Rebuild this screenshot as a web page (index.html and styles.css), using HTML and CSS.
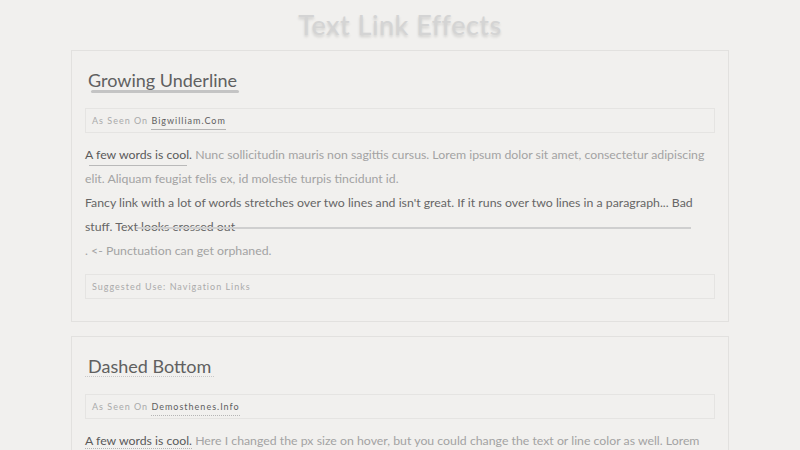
FILE: index.html
```html
<!DOCTYPE html>
<html lang="en">
<head>
<meta charset="UTF-8" />
<meta name="viewport" content="width=device-width, initial-scale=1.0" />
<title>Text Link Effects</title>
<link rel="stylesheet" href="styles.css">
</head>
<body>
  <h1 class="page-title">Text Link Effects</h1>

  <!-- Effect 1 -->
  <section class="card">
    <h2><span class="grow-title">Growing Underline</span></h2>
    <div class="note">As Seen On <a href="#" class="source">Bigwilliam.Com</a></div>
    <p><a href="#" class="grow">A few words is cool.</a> Nunc sollicitudin mauris non sagittis cursus. Lorem ipsum dolor sit amet, consectetur adipiscing elit. Aliquam feugiat felis ex, id molestie turpis tincidunt id.</p>
    <p class="fancy"><a href="#" class="dark">Fancy link with a lot of words stretches over two lines and isn't great. If it runs over two lines in a paragraph... Bad stuff. Text looks crossed out</a><span class="cross"></span></p>
    <p>. &lt;- Punctuation can get orphaned.</p>
    <div class="note">Suggested Use: Navigation Links</div>
  </section>

  <!-- Effect 2 -->
  <section class="card">
    <h2><span class="dash-title">Dashed Bottom</span></h2>
    <div class="note">As Seen On <a href="#" class="source dashed">Demosthenes.Info</a></div>
    <p><a href="#" class="dashed-link">A few words is cool.</a> Here I changed the px size on hover, but you could change the text or line color as well. Lorem ipsum dolor sit amet, consectetur adipiscing elit.</p>
  </section>
</body>
</html>
```
FILE: styles.css
```css
:root {
  --clr-bg: #f1f0ee;
  --clr-border: #e2e1df;
  --clr-text: #a3a3a3;
  --clr-dark: #5a5a5a;
  --clr-line: #c4c4c4;
}

body {
  margin: 0;
  background: var(--clr-bg);
  font-family: Lato, "Liberation Sans", sans-serif;
  color: var(--clr-text);
}

a {
  color: var(--clr-dark);
  text-decoration: none;
}

.page-title {
  margin: 0 0 8px;
  padding-top: 8px;
  line-height: 34px;
  font-size: 27px;
  font-weight: 400;
  letter-spacing: .5px;
  text-align: center;
  color: #d4d4d4;
  text-shadow: 0 2px 3px rgba(0,0,0,.15);
}

/* --- Cards --- */
.card {
  width: 658px;
  box-sizing: border-box;
  margin: 0 auto 14px;
  padding: 17px 13px 22px;
  border: 1px solid var(--clr-border);
}

.card h2 {
  margin: 0 0 16px;
  font-size: 18px;
  font-weight: 400;
  line-height: 24px;
  color: #606060;
}

.grow-title {
  position: relative;
  display: inline-block;
  padding: 0 3px;
}
.grow-title::after {
  content: "";
  position: absolute;
  left: 6px;
  right: 1px;
  bottom: -1px;
  height: 3px;
  border-radius: 2px;
  background: var(--clr-line);
}

.dash-title {
  display: inline-block;
  padding: 0 3px;
  line-height: 20px;
  border-bottom: 1px dotted #c8c8c8;
}

.note {
  height: 23px;
  line-height: 23px;
  padding: 0 6px;
  border: 1px solid #e5e4e2;
  font-size: 9px;
  letter-spacing: 1px;
  color: #aaa;
}
.note .source {
  position: relative;
  color: #5e5e5e;
  font-weight: 400;
}
.note .source::after {
  content: "";
  position: absolute;
  left: 0;
  right: 0;
  bottom: -4px;
  height: 1px;
  background: #b5b5b5;
}
.note .source.dashed::after {
  height: 0;
  background: none;
  border-bottom: 1px dotted #b5b5b5;
}

/* --- Paragraphs --- */
.card p {
  margin: 0;
  font-size: 12.3px;
  line-height: 24px;
}
.card .note + p {
  margin-top: 10px;
}
.card p + .note {
  margin-top: 11px;
}

.grow {
  position: relative;
}
.grow::after {
  content: "";
  position: absolute;
  left: 4px;
  right: 5px;
  bottom: -4px;
  height: 1px;
  background: #b9b9b9;
}

.dashed-link {
  border-bottom: 1px dotted #b5b5b5;
}

.fancy {
  position: relative;
}
.fancy .dark {
  color: #666;
}
.cross {
  position: absolute;
  left: 51px;
  top: 36px;
  width: 555px;
  height: 2px;
  background: #cfcfcf;
}
```
